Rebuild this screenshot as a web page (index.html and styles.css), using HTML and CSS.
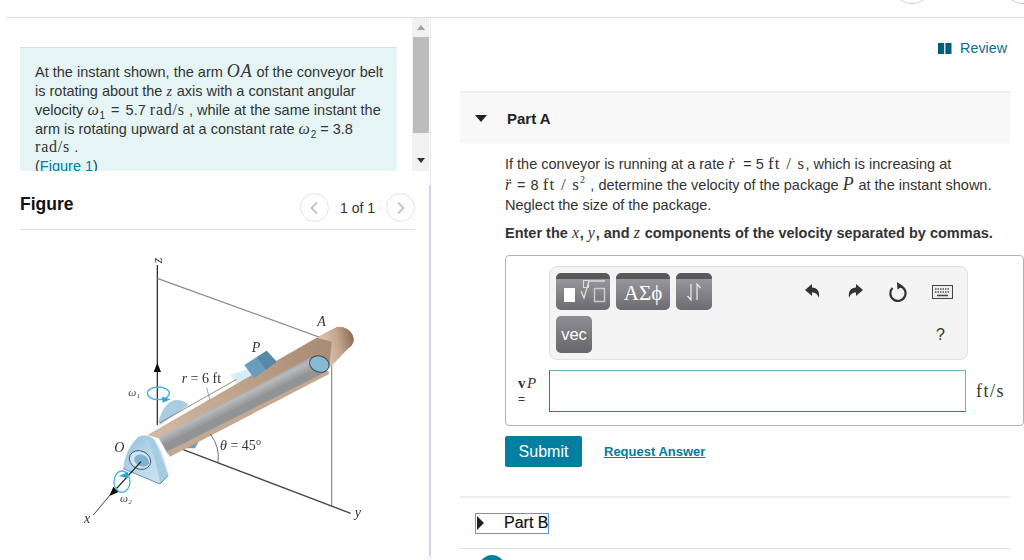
FILE: index.html
```html
<!DOCTYPE html>
<html lang="en">
<head>
<meta charset="utf-8">
<title>Conveyor belt problem</title>
<link rel="stylesheet" href="styles.css">
</head>
<body>
<span class="peek peek-a"></span>
<span class="peek peek-b"></span>
<main class="page">
  <section class="left">
    <div class="top-pane">
      <div class="problem">
        <p>At the instant shown, the arm <i class="m big">OA</i> of the conveyor belt<br>is rotating about the <i class="m small">z</i> axis with a constant angular<br>velocity <i class="m">ω</i><sub>1</sub> <span class="eqs">=</span> 5.7 <span class="m">rad/s</span> , while at the same instant the<br>arm is rotating upward at a constant rate <i class="m">ω</i><sub>2</sub> = 3.8<br><span class="m">rad/s</span> .</p>
        <p class="figlink">(<a href="#fig">Figure 1</a>)</p>
      </div>
      <div class="scrollbar">
        <span class="sb-up"></span>
        <span class="sb-thumb"></span>
        <span class="sb-down"></span>
      </div>
    </div>
    <div class="figure-head">
      <h2>Figure</h2>
      <div class="pager">
        <span class="circle"><svg width="10" height="14" viewBox="0 0 10 14"><path d="M8 1.500 2.500 7 8 12.500" fill="none" stroke="#c4c4c4" stroke-width="1.800"/></svg></span>
        <span class="count">1 of 1</span>
        <span class="circle"><svg width="10" height="14" viewBox="0 0 10 14"><path d="M2 1.500 7.500 7 2 12.500" fill="none" stroke="#c4c4c4" stroke-width="1.800"/></svg></span>
      </div>
    </div>
    <svg id="fig" class="diagram" width="320" height="320" viewBox="0 0 960 960">
      <defs>
        <filter id="soft" x="-5%" y="-5%" width="110%" height="110%"><feGaussianBlur stdDeviation="1.600"/></filter>
        <linearGradient id="cap" gradientUnits="userSpaceOnUse" x1="790" y1="320" x2="880" y2="300"><stop offset="0" stop-color="#d9c3af"/><stop offset="0.500" stop-color="#c4a68e"/><stop offset="1" stop-color="#8f6f58"/></linearGradient>
        <linearGradient id="top" gradientUnits="userSpaceOnUse" x1="262" y1="585" x2="770" y2="293"><stop offset="0" stop-color="#d3bba5"/><stop offset="1" stop-color="#ab8c75"/></linearGradient>
        <linearGradient id="chan" gradientUnits="userSpaceOnUse" x1="510" y1="455" x2="535" y2="505"><stop offset="0" stop-color="#87898b"/><stop offset="0.500" stop-color="#b8b9ba"/><stop offset="1" stop-color="#929394"/></linearGradient>
        <linearGradient id="brk" x1="0" y1="0" x2="1" y2="1"><stop offset="0" stop-color="#8fbfdc"/><stop offset="0.500" stop-color="#b8d8ea"/><stop offset="1" stop-color="#cfe5f1"/></linearGradient>
      </defs>
      <g filter="url(#soft)">
        <path d="M292 75V555" stroke="#333" stroke-width="4" fill="none"/>
        <path d="M292 368 281 396H303Z" fill="#111"/>
        <path d="M292 115 815 305V800" stroke="#8a8a8a" stroke-width="3.500" fill="none"/>
        <path d="M360 625 872 820" stroke="#444" stroke-width="4" fill="none"/>
        <path d="M150 765 100 825" stroke="#444" stroke-width="3" fill="none"/>
        <path d="M295 545Q310 490 345 480 370 478 385 495L300 555Z" fill="#a9cde2"/>
        <path d="M370 625 420 598 405 625Z" fill="#6f9fbb"/>
        <path d="M512 405 570 385 585 402 530 432Z" fill="#d5edf8"/>
        <path d="M262 585 770 293 830 262Q860 256 878 285 888 310 865 325L808 378 750 355 295 595Z" fill="url(#top)"/>
        <path d="M770 293 830 262Q860 256 878 285 888 310 865 325L808 385 815 305Z" fill="url(#cap)"/>
        <path d="M300 548 530 418" stroke="#8c735f" stroke-width="2.500" fill="none"/>
        <path d="M295 592 752 352 806 395 322 640Z" fill="url(#chan)"/>
        <path d="M320 635 805 392 807 402 330 650Z" fill="#c4a891"/>
        <ellipse cx="778" cy="372" rx="30" ry="24" transform="rotate(20 778 372)" fill="#86b9d4" stroke="#3d4a52" stroke-width="3"/>
        <path d="M553 375 620 332 650 365 582 415Z" fill="#6a9dbb"/>
        <path d="M590 352 620 332 650 365 618 390Z" fill="#568aa9"/>
        <path d="M440 443 450 482" stroke="#777" stroke-width="2" fill="none"/>
        <path d="M451 582Q480 620 474 668" stroke="#555" stroke-width="2.500" fill="none"/>
        <path d="M188 690Q196 625 235 590 262 580 282 598 312 640 325 706L300 732 190 686Z" fill="url(#brk)"/>
        <path d="M282 598 325 706 300 732Q288 650 258 586Z" fill="#a6cce3"/>
        <path d="M190 686 300 732 325 706" fill="none" stroke="#5a7f96" stroke-width="2.500"/>
        <ellipse cx="240" cy="660" rx="33" ry="27" transform="rotate(25 240 660)" fill="#cfe4f0" stroke="#3d4b55" stroke-width="2.500"/>
        <ellipse cx="245" cy="662" rx="23" ry="17" transform="rotate(25 245 662)" fill="#7fb2cf"/>
        <path d="M243 665 170 745" stroke="#222" stroke-width="4" fill="none"/>
        <path d="M148 768 160 740 176 756Z" fill="#111"/>
        <ellipse cx="295" cy="460" rx="33" ry="19" fill="none" stroke="#46b4e4" stroke-width="4"/>
        <path d="M332 478 306 470 308 488Z" fill="#2ca8de"/>
        <ellipse cx="186" cy="725" rx="24" ry="32" fill="none" stroke="#46b4e4" stroke-width="4"/>
        <path d="M176 708 205 695 204 715Z" fill="#2ca8de"/>
        <text class="fig-t" transform="rotate(-90 296 58)" x="284" y="68">z</text>
        <text class="fig-t" x="772" y="258">A</text>
        <text class="fig-t" x="575" y="335">P</text>
        <text class="fig-t" x="365" y="430">r<tspan class="fig-up"> = 6 ft</tspan></text>
        <text class="fig-t" x="480" y="630">θ<tspan class="fig-up"> = 45°</tspan></text>
        <text class="fig-t" x="163" y="636">O</text>
        <text class="fig-s" x="205" y="468">ω₁</text>
        <text class="fig-s" x="180" y="787">ω₂</text>
        <text class="fig-t" x="72" y="850">x</text>
        <text class="fig-t" x="884" y="830">y</text>
      </g>
    </svg>
  </section>
  <section class="right">
    <a class="review" href="#review">
      <svg width="14" height="11" viewBox="0 0 14 11"><path d="M0 0H6.200V11H0ZM7.400 0H13.500V11H7.400Z" fill="#055f7b"/></svg>
      Review
    </a>
    <div class="part-a">
      <svg class="tri" width="12" height="7" viewBox="0 0 12 7"><path d="M0 0H12L6 7Z" fill="#222"/></svg>
      <h3>Part A</h3>
    </div>
    <div class="body">
      <p class="q">If the conveyor is running at a rate <i class="m">ṙ</i> &nbsp;= 5 <span class="m unitm">ft / s</span>, which is increasing at<br><i class="m">r̈</i> <span class="eqs">=</span> 8 <span class="m unitm">ft / s<sup>2</sup></span> , determine the velocity of the package <i class="m big">P</i> at the instant shown.<br>Neglect the size of the package.</p>
      <p class="ask">Enter the <i class="m reg">x</i>, <i class="m reg">y</i>, and <i class="m reg">z</i> components of the velocity separated by commas.</p>
      <div class="answer">
        <div class="toolbar">
          <div class="tool-row">
            <span class="btn b-wide">
              <svg width="54" height="37" viewBox="0 0 54 37"><rect x="8" y="15" width="11" height="14" fill="#fff"/><rect x="27.500" y="7.500" width="5" height="7" fill="none" stroke="#ddd"/><path d="M25 18 28 25 33 8H49" fill="none" stroke="#ddd" stroke-width="1.300"/><rect x="38.500" y="15.500" width="10" height="13" fill="none" stroke="#ccc" stroke-width="1.500"/></svg>
            </span>
            <span class="btn b-wide greek">ΑΣϕ</span>
            <span class="btn b-narrow">
              <svg width="16" height="20" viewBox="0 0 16 20"><path d="M5 2V18L1.500 14M11 18V2L14.500 6" fill="none" stroke="#eee" stroke-width="1.200"/></svg>
            </span>
            <span class="tool-icons">
              <svg width="18" height="18" viewBox="0 0 18 18"><path d="M1 7 8 1V4.500C13 4.500 16 8 15 15 13.500 11 11.500 9.500 8 9.500V13Z" fill="#333"/></svg>
              <svg width="18" height="18" viewBox="0 0 18 18"><path d="M17 7 10 1V4.500C5 4.500 2 8 3 15 4.500 11 6.500 9.500 10 9.500V13Z" fill="#333"/></svg>
              <svg width="20" height="20" viewBox="0 0 20 20"><path d="M11 3.800A7.600 7.600 0 1 1 4.500 6" fill="none" stroke="#333" stroke-width="2.200"/><path d="M9 0 15 4 9.500 7.500Z" fill="#333"/></svg>
              <svg width="22" height="14" viewBox="0 0 22 14"><rect x="0.500" y="0.500" width="20" height="13" fill="#eee" stroke="#444"/><path d="M3 4H18M3 7H18" stroke="#555" stroke-width="1.500" stroke-dasharray="1.500 1"/><path d="M5 10.500H16" stroke="#444" stroke-width="1.500"/></svg>
            </span>
          </div>
          <div class="tool-row second">
            <span class="btn b-narrow vec">vec</span>
            <span class="help">?</span>
          </div>
        </div>
        <div class="input-row">
          <span class="var"><span class="m vp"><b>v</b><i>P</i></span><span class="eq">=</span></span>
          <span class="field"></span>
          <span class="m unit">ft/s</span>
        </div>
      </div>
      <div class="actions">
        <a class="submit" href="#submit">Submit</a>
        <a class="request" href="#request">Request Answer</a>
      </div>
    </div>
    <div class="part-b">
      <span class="focus">
        <svg width="10" height="14" viewBox="0 0 10 14"><path d="M1 0 8 7 1 14Z" fill="#222"/></svg>
        <h3>Part B</h3>
      </span>
    </div>
    <span class="next-dot"></span>
  </section>
</main>
</body>
</html>
```

FILE: styles.css
```css
html, body {
  margin: 0;
  padding: 0;
  height: 560px;
  overflow: hidden;
  background: #fff;
  font-family: "Liberation Sans", Arial, sans-serif;
  color: #333;
}
p, h2, h3 { margin: 0; }
a { color: #007c9e; text-decoration: none; }

.peek {
  position: absolute;
  top: -14px;
  width: 26px;
  height: 16px;
  border: 1px solid #ccc;
  border-radius: 50%;
}
.peek-a { left: 898px; }
.peek-b { left: 1009px; }

.page {
  display: flex;
  height: 542px;
  margin: 17px 0 0 6px;
  border-top: 1px solid #ddd;
}

.m { font-family: "Liberation Serif", serif; font-size: 16px; letter-spacing: 0.8px; }
.big { font-size: 18px; }
.small { font-size: 14px; }
.reg { font-weight: normal; }
.unitm { font-size: 17px; letter-spacing: 1.200px; }
.eqs { margin: 0 1px; }
.problem .eqs { margin: 0 2px; }
sub { font-size: 10px; line-height: 0; }
sup { font-size: 10px; line-height: 0; }

/* left column */
.left {
  position: relative;
  width: 424px;
  flex: none;
  border-right: 1px solid #e6ecf1;
}
.left::after {
  content: "";
  position: absolute;
  top: 167px;
  bottom: 4px;
  right: -1px;
  width: 2px;
  background: #c9d8e6;
}
.top-pane {
  display: flex;
  align-items: flex-start;
  padding-left: 14px;
  height: 167px;
}
.problem {
  width: 347px;
  height: 109px;
  margin-top: 29px;
  padding: 14px 15px 0;
  overflow: hidden;
  flex: none;
  background: #e5f5f6;
  border-top: 1px solid #d6e2e4;
  font-size: 14.500px;
  line-height: 18.500px;
  white-space: nowrap;
}
.figlink a { color: #007c9e; }
.scrollbar {
  display: flex;
  flex-direction: column;
  align-items: center;
  width: 17px;
  height: 153px;
  margin-left: 15px;
  flex: none;
  background: #f1f1f1;
}
.sb-up {
  margin-top: 7px;
  border: 4px solid transparent;
  border-top: 0;
  border-bottom: 5px solid #a3a3a3;
}
.sb-thumb {
  width: 16px;
  height: 96px;
  margin-top: 7px;
  background: #bcbcbc;
}
.sb-down {
  margin-top: 25px;
  border: 4px solid transparent;
  border-bottom: 0;
  border-top: 5px solid #333;
}
.figure-head {
  display: flex;
  align-items: center;
  justify-content: space-between;
  margin: 0 15px 0 14px;
  height: 44px;
  border-bottom: 1px solid #ddd;
}
.figure-head h2 { font-size: 17.500px; color: #111; margin-top: -6px; }
.pager { display: flex; align-items: center; margin-top: 1px; }
.circle {
  display: flex;
  align-items: center;
  justify-content: center;
  width: 27px;
  height: 27px;
  border: 1px solid #e2e2e2;
  border-radius: 50%;
}
.count { font-size: 14px; margin: 0 11px; }
.diagram { display: block; margin: 10px 0 0 54px; }
.fig-t { font: italic 42px "Liberation Serif", serif; fill: #333; }
.fig-up { font-style: normal; }
.fig-s { font: italic 34px "Liberation Serif", serif; fill: #444; }

/* right column */
.right {
  position: relative;
  flex: 1;
  min-width: 0;
  padding-left: 29px;
  width: 550px;
}
.review {
  display: flex;
  align-items: center;
  justify-content: flex-end;
  gap: 8px;
  width: 547px;
  height: 18px;
  margin-top: 21px;
  font-size: 14.300px;
  color: #0e6d8a;
}
.part-a {
  display: flex;
  align-items: center;
  width: 550px;
  height: 50px;
  margin-top: 34px;
  background: #f8f8f8;
  border-top: 2px solid #eee;
}
.tri { margin-left: 15px; }
.part-a h3 { margin-left: 20px; font-size: 15px; color: #222; }
.body { box-sizing: border-box; width: 563px; padding-left: 45px; }
.q { margin-top: 11px; font-size: 14.500px; line-height: 20px; white-space: nowrap; }
.ask { margin-top: 9px; font-size: 14.500px; font-weight: bold; line-height: 18px; white-space: nowrap; }
.answer {
  box-sizing: border-box;
  width: 519px;
  height: 171px;
  margin-top: 13px;
  padding: 10px 0 0 43px;
  border: 1px solid #b3b3b3;
  border-radius: 4px;
}
.toolbar {
  box-sizing: border-box;
  width: 419px;
  height: 94px;
  padding: 6px 6px;
  background: #f4f4f4;
  border: 1px solid #e0e0e0;
  border-radius: 8px;
}
.tool-row { display: flex; align-items: center; gap: 6px; height: 37px; }
.second { justify-content: space-between; margin-top: 6px; }
.btn {
  display: flex;
  align-items: center;
  justify-content: center;
  box-sizing: border-box;
  height: 37px;
  border-radius: 5px;
  color: #fff;
  background: linear-gradient(#58585c 0 6px, #96969c 6px, #6c6c70);
}
.b-wide { width: 54px; }
.b-narrow { width: 36px; }
.greek { font: 21px "Liberation Serif", serif; padding-top: 3px; }
.vec { background: linear-gradient(#8e8e92, #66666a); font-size: 16.500px; }
.tool-icons {
  display: flex;
  align-items: center;
  gap: 24px;
  margin-left: auto;
  margin-right: 7px;
}
.help { font-size: 16px; margin-right: 16px; }
.input-row { display: flex; align-items: center; margin: 10px 0 0 -31px; }
.var { display: flex; flex-direction: column; width: 31px; line-height: 14px; }
.vp { font-size: 15px; letter-spacing: 1.500px; }
.eq { font-size: 12px; margin-top: 2px; }
.field {
  box-sizing: border-box;
  width: 417px;
  height: 42px;
  border: 1px solid #6bb0c6;
  border-left-color: #1f7e9a;
  border-bottom-color: #1f7e9a;
  background: #fff;
}
.unit { margin-left: 10px; font-size: 18px; letter-spacing: 1.500px; }
.actions { display: flex; align-items: center; gap: 22px; margin-top: 10px; }
.submit {
  display: flex;
  align-items: center;
  justify-content: center;
  width: 77px;
  height: 31px;
  border-radius: 2px;
  background: #027ea0;
  color: #fff;
  font-size: 16px;
}
.request { font-size: 13px; font-weight: bold; text-decoration: underline; }
.part-b {
  display: flex;
  align-items: center;
  width: 550px;
  height: 50px;
  margin-top: 29px;
  border-top: 2px solid #eee;
  border-bottom: 1px solid #e2e2e2;
}
.focus {
  display: flex;
  align-items: center;
  gap: 18px;
  box-sizing: border-box;
  height: 19px;
  margin-left: 16px;
  outline: 1px solid #5a96f0;
}
.part-b h3 { font-size: 16px; font-weight: normal; color: #111; -webkit-text-stroke: 0.2px #111; }
.next-dot {
  position: absolute;
  left: 48px;
  top: 537px;
  width: 26px;
  height: 26px;
  border-radius: 50%;
  background: #027ea0;
}
```
